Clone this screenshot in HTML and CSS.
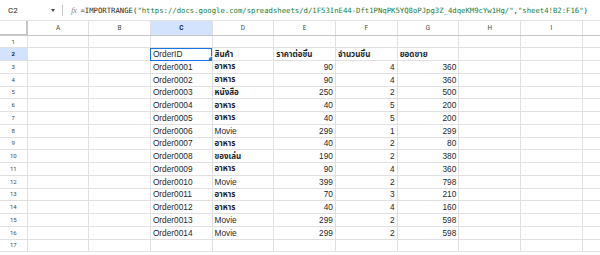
FILE: index.html
```html
<!DOCTYPE html>
<html lang="th">

<head>
  <meta charset="UTF-8">
  <meta name="viewport" content="width=device-width, initial-scale=1.0">
  <title>Sheet</title>
  <link rel="stylesheet" href="styles.css">
</head>

<body>
  <header class="formula-bar">
    <div class="name-box">
      <span>C2</span>
      <span class="caret"></span>
    </div>
    <span class="divider"></span>
    <span class="fx">fx</span>
    <code class="formula">=IMPORTRANGE(<span class="str">"https://docs.google.com/spreadsheets/d/1F53InE44-Dft1PNqPK5YQ8oPJpg3Z_4dqeKM9cYw1Hg/"</span>,<span class="str">"sheet4!B2:F16"</span>)</code>
  </header>

  <main class="grid-wrap">
    <table class="grid">
      <colgroup>
        <col class="col-index">
        <col><col><col><col><col><col><col><col><col><col>
      </colgroup>
      <thead>
        <tr>
          <th class="corner"></th>
          <th>A</th><th>B</th><th class="active">C</th><th>D</th><th>E</th>
          <th>F</th><th>G</th><th>H</th><th>I</th><th></th>
        </tr>
      </thead>
      <tbody>
        <tr><th>1</th><td></td><td></td><td></td><td></td><td></td><td></td><td></td><td></td><td></td><td></td></tr>
        <tr><th class="active">2</th><td></td><td></td><td class="selected">OrderID</td><td class="th">สินค้า</td><td class="th">ราคาต่อชิ้น</td><td class="th">จำนวนชิ้น</td><td class="th">ยอดขาย</td><td></td><td></td><td></td></tr>
        <tr><th>3</th><td></td><td></td><td>Order0001</td><td class="th">อาหาร</td><td class="num">90</td><td class="num">4</td><td class="num">360</td><td></td><td></td><td></td></tr>
        <tr><th>4</th><td></td><td></td><td>Order0002</td><td class="th">อาหาร</td><td class="num">90</td><td class="num">4</td><td class="num">360</td><td></td><td></td><td></td></tr>
        <tr><th>5</th><td></td><td></td><td>Order0003</td><td class="th">หนังสือ</td><td class="num">250</td><td class="num">2</td><td class="num">500</td><td></td><td></td><td></td></tr>
        <tr><th>6</th><td></td><td></td><td>Order0004</td><td class="th">อาหาร</td><td class="num">40</td><td class="num">5</td><td class="num">200</td><td></td><td></td><td></td></tr>
        <tr><th>7</th><td></td><td></td><td>Order0005</td><td class="th">อาหาร</td><td class="num">40</td><td class="num">5</td><td class="num">200</td><td></td><td></td><td></td></tr>
        <tr><th>8</th><td></td><td></td><td>Order0006</td><td>Movie</td><td class="num">299</td><td class="num">1</td><td class="num">299</td><td></td><td></td><td></td></tr>
        <tr><th>9</th><td></td><td></td><td>Order0007</td><td class="th">อาหาร</td><td class="num">40</td><td class="num">2</td><td class="num">80</td><td></td><td></td><td></td></tr>
        <tr><th>10</th><td></td><td></td><td>Order0008</td><td class="th">ของเล่น</td><td class="num">190</td><td class="num">2</td><td class="num">380</td><td></td><td></td><td></td></tr>
        <tr><th>11</th><td></td><td></td><td>Order0009</td><td class="th">อาหาร</td><td class="num">90</td><td class="num">4</td><td class="num">360</td><td></td><td></td><td></td></tr>
        <tr><th>12</th><td></td><td></td><td>Order0010</td><td>Movie</td><td class="num">399</td><td class="num">2</td><td class="num">798</td><td></td><td></td><td></td></tr>
        <tr><th>13</th><td></td><td></td><td>Order0011</td><td class="th">อาหาร</td><td class="num">70</td><td class="num">3</td><td class="num">210</td><td></td><td></td><td></td></tr>
        <tr><th>14</th><td></td><td></td><td>Order0012</td><td class="th">อาหาร</td><td class="num">40</td><td class="num">4</td><td class="num">160</td><td></td><td></td><td></td></tr>
        <tr><th>15</th><td></td><td></td><td>Order0013</td><td>Movie</td><td class="num">299</td><td class="num">2</td><td class="num">598</td><td></td><td></td><td></td></tr>
        <tr><th>16</th><td></td><td></td><td>Order0014</td><td>Movie</td><td class="num">299</td><td class="num">2</td><td class="num">598</td><td></td><td></td><td></td></tr>
        <tr><th>17</th><td></td><td></td><td></td><td></td><td></td><td></td><td></td><td></td><td></td><td></td></tr>
      </tbody>
    </table>
  </main>
</body>

</html>
```

FILE: styles.css
```css
* {
  margin: 0;
  box-sizing: border-box;
}

body {
  width: 600px;
  height: 255px;
  overflow: hidden;
  background: #fff;
  font-family: "Liberation Sans", Arial, sans-serif;
  color: #1f1f1f;
}

.formula-bar {
  display: flex;
  align-items: center;
  height: 21px;
  border-bottom: 1px solid #e1e3e1;
  background: #fff;
}

.name-box {
  display: flex;
  align-items: center;
  justify-content: space-between;
  inline-size: 57px;
  padding-inline: 8px 2px;
  font-family: Roboto, sans-serif;
  font-size: 8px;
  color: #1f1f1f;
}

.caret {
  width: 0;
  height: 0;
  border-left: 2.5px solid transparent;
  border-right: 2.5px solid transparent;
  border-top: 3px solid #444746;
}

.divider {
  width: 1px;
  height: 11px;
  margin-inline: 5px 8px;
  background: #c7c7c7;
}

.fx {
  font-family: "Liberation Serif", serif;
  font-style: italic;
  font-size: 9px;
  color: #8f8f8f;
  margin-inline-end: 4px;
  letter-spacing: -0.5px;
}

.formula {
  font-family: "DejaVu Sans Mono", monospace;
  font-size: 7.27px;
  color: #1f1f1f;
  white-space: nowrap;
}

.str {
  color: #188038;
}

.grid-wrap {
  overflow: hidden;
}

.grid {
  table-layout: fixed;
  border-collapse: collapse;
  width: 644px;
}

.grid col {
  width: 61.7px;
}

.grid col.col-index {
  width: 27px;
}

.grid tbody tr {
  height: 12.75px;
}

.grid th,
.grid td {
  border: 1px solid #e0e0e0;
  height: 12.75px;
  padding: 0 2px 1.5px;
  white-space: nowrap;
  overflow: hidden;
  font-size: 8.3px;
  line-height: 1;
  vertical-align: bottom;
  text-align: left;
}

.grid thead th {
  height: 14px;
  font-family: Roboto, sans-serif;
  font-size: 6.4px;
  font-weight: 400;
  color: #444746;
  text-align: center;
  vertical-align: middle;
  padding: 0;
  border-bottom: 1px solid #c4c7c5;
  border-top: none;
}

.grid tbody th {
  font-family: Roboto, sans-serif;
  font-size: 6px;
  font-weight: 400;
  color: #444746;
  text-align: center;
  vertical-align: middle;
  padding: 0;
  border-left: none;
}

.grid thead th.corner {
  border-right: 2px solid #c4c7c5;
  border-bottom: 2px solid #c4c7c5;
  border-left: none;
}

.grid th.active {
  background: #d3e3fd;
  color: #041e49;
  font-weight: 700;
}

.grid td.num {
  text-align: right;
}

.grid td.th {
  font-family: "Noto Sans Thai", "Liberation Sans", sans-serif;
  font-weight: 700;
  font-size: 8px;
}

.grid td.selected {
  position: relative;
  outline: 1.5px solid #1a73e8;
  outline-offset: -1px;
}

.grid td.selected::after {
  content: "";
  position: absolute;
  right: -3px;
  bottom: -3px;
  width: 5px;
  height: 5px;
  border-radius: 50%;
  background: #1a73e8;
  border: 1px solid #fff;
}
```
